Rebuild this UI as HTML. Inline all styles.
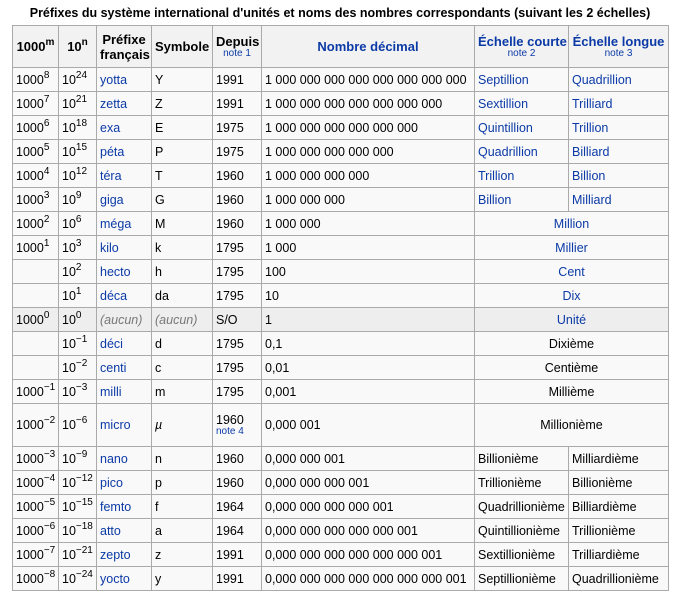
<!DOCTYPE html>
<html><head><meta charset="utf-8"><style>
body{margin:0;background:#fff;font-family:"Liberation Sans",sans-serif;font-size:12.5px;color:#000}
.cap{position:absolute;left:0;top:6px;width:680px;text-align:center;font-weight:bold;font-size:12.5px}
table{position:absolute;left:12px;top:25px;border-collapse:collapse;table-layout:fixed;background:#f9f9f9;width:656px}
td,th{border:1px solid #aaa;padding:0 3px;white-space:nowrap;overflow:hidden;height:23px}
th{background:#f2f2f2;font-weight:bold;text-align:center;height:41px;line-height:15px;font-size:13px}
a{color:#0b3aa6;text-decoration:none}
sup{font-size:10px;vertical-align:6px;line-height:0}
.n{font-size:10px;font-weight:normal;color:#0b3aa6;display:block;line-height:10px}
.c{text-align:center}
.g td{background:#eee}
.i{color:#777;font-style:italic}
.s{font-size:10px;color:#0b3aa6;display:block;line-height:10px}
</style></head><body>
<div class="cap">Préfixes du système international d'unités et noms des nombres correspondants (suivant les 2 échelles)</div>
<table>
<colgroup><col style="width:46px"><col style="width:38px"><col style="width:55px"><col style="width:61px"><col style="width:49px"><col style="width:213px"><col style="width:94px"><col style="width:100px"></colgroup>
<tr><th>1000<sup>m</sup></th><th>10<sup>n</sup></th><th>Préfixe<br>français</th><th>Symbole</th><th>Depuis<span class="n">note 1</span></th><th><a>Nombre décimal</a></th><th><a>Échelle courte</a><span class="n">note 2</span></th><th><a>Échelle longue</a><span class="n">note 3</span></th></tr>
<tr><td>1000<sup>8</sup></td><td>10<sup>24</sup></td><td><a>yotta</a></td><td>Y</td><td>1991</td><td>1 000 000 000 000 000 000 000 000</td><td><a>Septillion</a></td><td><a>Quadrillion</a></td></tr>
<tr><td>1000<sup>7</sup></td><td>10<sup>21</sup></td><td><a>zetta</a></td><td>Z</td><td>1991</td><td>1 000 000 000 000 000 000 000</td><td><a>Sextillion</a></td><td><a>Trilliard</a></td></tr>
<tr><td>1000<sup>6</sup></td><td>10<sup>18</sup></td><td><a>exa</a></td><td>E</td><td>1975</td><td>1 000 000 000 000 000 000</td><td><a>Quintillion</a></td><td><a>Trillion</a></td></tr>
<tr><td>1000<sup>5</sup></td><td>10<sup>15</sup></td><td><a>péta</a></td><td>P</td><td>1975</td><td>1 000 000 000 000 000</td><td><a>Quadrillion</a></td><td><a>Billiard</a></td></tr>
<tr><td>1000<sup>4</sup></td><td>10<sup>12</sup></td><td><a>téra</a></td><td>T</td><td>1960</td><td>1 000 000 000 000</td><td><a>Trillion</a></td><td><a>Billion</a></td></tr>
<tr><td>1000<sup>3</sup></td><td>10<sup>9</sup></td><td><a>giga</a></td><td>G</td><td>1960</td><td>1 000 000 000</td><td><a>Billion</a></td><td><a>Milliard</a></td></tr>
<tr><td>1000<sup>2</sup></td><td>10<sup>6</sup></td><td><a>méga</a></td><td>M</td><td>1960</td><td>1 000 000</td><td colspan="2" class="c"><a>Million</a></td></tr>
<tr><td>1000<sup>1</sup></td><td>10<sup>3</sup></td><td><a>kilo</a></td><td>k</td><td>1795</td><td>1 000</td><td colspan="2" class="c"><a>Millier</a></td></tr>
<tr><td></td><td>10<sup>2</sup></td><td><a>hecto</a></td><td>h</td><td>1795</td><td>100</td><td colspan="2" class="c"><a>Cent</a></td></tr>
<tr><td></td><td>10<sup>1</sup></td><td><a>déca</a></td><td>da</td><td>1795</td><td>10</td><td colspan="2" class="c"><a>Dix</a></td></tr>
<tr class="g"><td>1000<sup>0</sup></td><td>10<sup>0</sup></td><td class="i">(aucun)</td><td class="i">(aucun)</td><td>S/O</td><td>1</td><td colspan="2" class="c"><a>Unité</a></td></tr>
<tr><td></td><td>10<sup>−1</sup></td><td><a>déci</a></td><td>d</td><td>1795</td><td>0,1</td><td colspan="2" class="c">Dixième</td></tr>
<tr><td></td><td>10<sup>−2</sup></td><td><a>centi</a></td><td>c</td><td>1795</td><td>0,01</td><td colspan="2" class="c">Centième</td></tr>
<tr><td>1000<sup>−1</sup></td><td>10<sup>−3</sup></td><td><a>milli</a></td><td>m</td><td>1795</td><td>0,001</td><td colspan="2" class="c">Millième</td></tr>
<tr><td style="height:42px">1000<sup>−2</sup></td><td>10<sup>−6</sup></td><td><a>micro</a></td><td><i>µ</i></td><td>1960<span class="s">note 4</span></td><td>0,000 001</td><td colspan="2" class="c">Millionième</td></tr>
<tr><td>1000<sup>−3</sup></td><td>10<sup>−9</sup></td><td><a>nano</a></td><td>n</td><td>1960</td><td>0,000 000 001</td><td>Billionième</td><td>Milliardième</td></tr>
<tr><td>1000<sup>−4</sup></td><td>10<sup>−12</sup></td><td><a>pico</a></td><td>p</td><td>1960</td><td>0,000 000 000 001</td><td>Trillionième</td><td>Billionième</td></tr>
<tr><td>1000<sup>−5</sup></td><td>10<sup>−15</sup></td><td><a>femto</a></td><td>f</td><td>1964</td><td>0,000 000 000 000 001</td><td>Quadrillionième</td><td>Billiardième</td></tr>
<tr><td>1000<sup>−6</sup></td><td>10<sup>−18</sup></td><td><a>atto</a></td><td>a</td><td>1964</td><td>0,000 000 000 000 000 001</td><td>Quintillionième</td><td>Trillionième</td></tr>
<tr><td>1000<sup>−7</sup></td><td>10<sup>−21</sup></td><td><a>zepto</a></td><td>z</td><td>1991</td><td>0,000 000 000 000 000 000 001</td><td>Sextillionième</td><td>Trilliardième</td></tr>
<tr><td>1000<sup>−8</sup></td><td>10<sup>−24</sup></td><td><a>yocto</a></td><td>y</td><td>1991</td><td>0,000 000 000 000 000 000 000 001</td><td>Septillionième</td><td>Quadrillionième</td></tr>
</table>
</body></html>
